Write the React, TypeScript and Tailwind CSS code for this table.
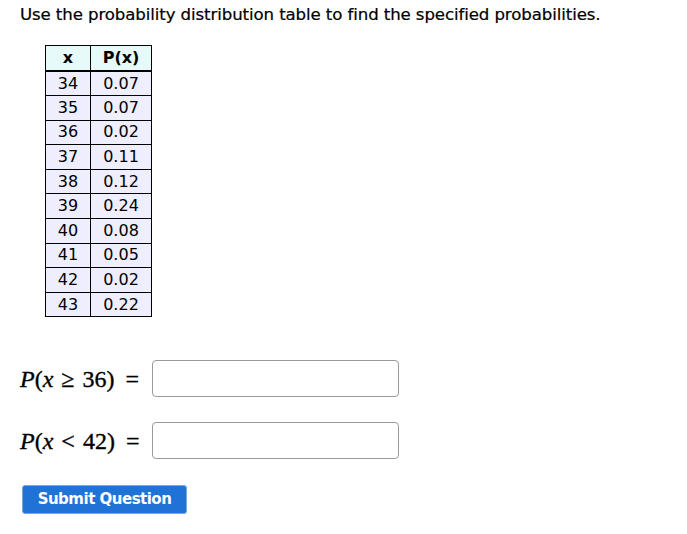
// 확률분포표 문제 화면
const ROWS: [number, string][] = [
  [34, '0.07'],
  [35, '0.07'],
  [36, '0.02'],
  [37, '0.11'],
  [38, '0.12'],
  [39, '0.24'],
  [40, '0.08'],
  [41, '0.05'],
  [42, '0.02'],
  [43, '0.22'],
]

const sans = "font-['DejaVu_Sans',Verdana,sans-serif]"
const serif = "font-['Liberation_Serif','DejaVu_Serif',serif]"

function MathLabel({ op, n }: { op: string; n: number }) {
  return (
    <span className={`${serif} text-[24px] text-black w-[132px] shrink-0 whitespace-nowrap [-webkit-text-stroke:0.35px_black]`}>
      <i>P</i>(<i>x</i><span className="mx-[8px]">{op}</span>{n})<span className="ml-[11px]">=</span>
    </span>
  )
}

export default function App() {
  return (
    <div className={`${sans} w-[687px] h-[534px] bg-white text-black relative`}>
      <p className="absolute left-[20px] top-[3px] text-[16.6px] tracking-[-0.1px] [-webkit-text-stroke:0.2px_black]">
        Use the probability distribution table to find the specified probabilities.
      </p>
      <div className="pt-[45px] pl-[45px]">
        <table className="border-collapse text-[16px]">
          <thead>
            <tr className="bg-[#e6fafa]">
              <th className="border border-black border-b-2 w-[45px] h-[25px] font-bold text-center">x</th>
              <th className="border border-black border-b-2 w-[61px] h-[25px] font-bold text-center">P(x)</th>
            </tr>
          </thead>
          <tbody>
            {ROWS.map(([x, p]) => (
              <tr key={x} className="bg-[#eeeeff]">
                <td className="border border-black h-[24.6px] text-center leading-none">{x}</td>
                <td className="border border-black h-[24.6px] text-center leading-none">{p}</td>
              </tr>
            ))}
          </tbody>
        </table>
      </div>
      <div className="pl-[20px] mt-[43px] flex flex-col gap-[25px]">
        <div className="flex items-center">
          <MathLabel op="≥" n={36} />
          <div className="w-[247px] h-[37px] border border-[#9a9a9a] rounded-[4px] bg-white" />
        </div>
        <div className="flex items-center">
          <MathLabel op="<" n={42} />
          <div className="w-[247px] h-[37px] border border-[#9a9a9a] rounded-[4px] bg-white" />
        </div>
      </div>
      <button className="absolute left-[22px] top-[485px] w-[165px] h-[29px] bg-[#1f72d6] border border-[#7aa7dd] rounded-[3px] text-white text-[15px] tracking-[-0.5px] font-bold leading-none">
        Submit Question
      </button>
    </div>
  )
}
